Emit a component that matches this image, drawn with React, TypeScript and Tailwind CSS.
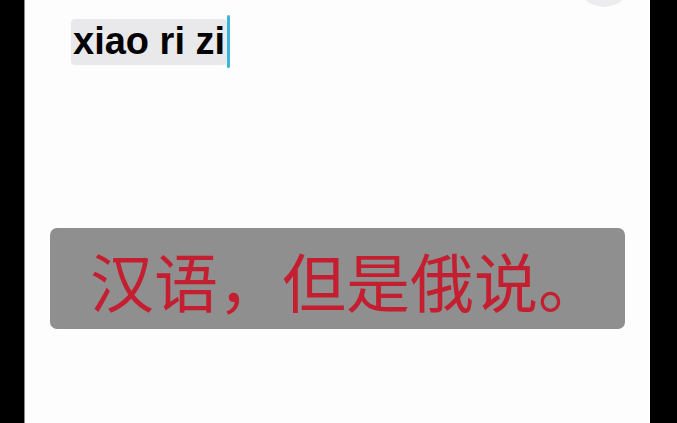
import React from 'react';

const App: React.FC = () => {
  return (
    <div className="flex h-[423px] w-[677px] overflow-hidden bg-black">
      <div className="w-[24px] shrink-0" />
      <div className="relative w-[626px] shrink-0 border-l border-[#8a8a8a] bg-[#fefdfe]">
        <div className="absolute left-[551px] top-[-49px] h-[56px] w-[56px] rounded-full bg-[#ececee]" />

        <div className="flex h-[53px] items-center pl-[46px] pt-0 mt-[15px]">
          <span
            className="flex h-[46px] items-center rounded-[4px] bg-[#e9e9eb] px-[2px] text-[38px] font-bold text-black"
            style={{ fontFamily: '"Liberation Sans", Arial, sans-serif' }}
          >
            xiao ri zi
          </span>
          <span className="h-[53px] w-[3px] rounded-full bg-[#3db5d9]" />
        </div>

        <div className="mx-[25px] mt-[160px] flex h-[101px] items-center rounded-[7px] bg-[#8f8f8f] pl-[40px]">
          <span
            className="text-[64px] font-normal leading-none text-[#c41f30]"
            style={{ fontFamily: '"Noto Sans CJK SC", "Noto Sans", sans-serif' }}
          >
            汉语，但是俄说。
          </span>
        </div>
      </div>
    </div>
  );
};

export default App;
